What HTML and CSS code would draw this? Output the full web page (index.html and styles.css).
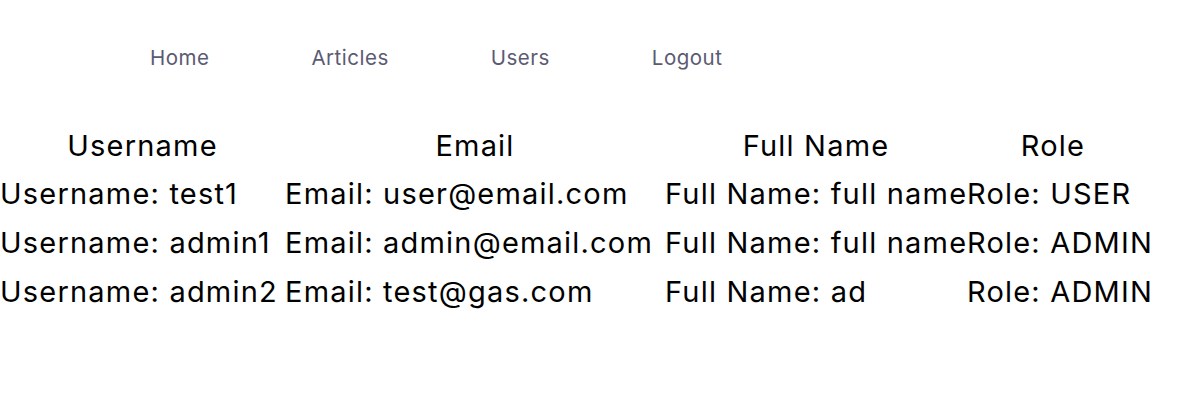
FILE: index.html
```html
<!DOCTYPE html>
<html>
<head>
<meta charset="utf-8">
<link rel="stylesheet" href="styles.css">
</head>
<body>
<nav class="nav">
  <a class="nav-link" href="#">Home</a>
  <a class="nav-link" href="#">Articles</a>
  <a class="nav-link" href="#">Users</a>
  <a class="nav-link" href="#">Logout</a>
</nav>
<table class="users">
  <colgroup>
    <col class="c1"><col class="c2"><col class="c3"><col class="c4">
  </colgroup>
  <thead>
    <tr><th>Username</th><th>Email</th><th>Full Name</th><th>Role</th></tr>
  </thead>
  <tbody>
    <tr><td>Username: test1</td><td>Email: user@email.com</td><td>Full Name: full name</td><td>Role: USER</td></tr>
    <tr><td>Username: admin1</td><td>Email: admin@email.com</td><td>Full Name: full name</td><td>Role: ADMIN</td></tr>
    <tr><td>Username: admin2</td><td>Email: test@gas.com</td><td>Full Name: ad</td><td>Role: ADMIN</td></tr>
  </tbody>
</table>
</body>
</html>
```
FILE: styles.css
```css
html, body {
  margin: 0;
  padding: 0;
  background: #ffffff;
  font-family: "Inter", "Noto Sans", sans-serif;
  color: #000000;
}
.nav {
  display: flex;
  gap: 102px;
  padding: 43px 0 0 150px;
  height: 78px;
  box-sizing: border-box;
}
.nav-link {
  font-size: 20.5px;
  line-height: 30px;
  letter-spacing: 0.5px;
  color: #5b5a73;
  text-decoration: none;
}
.users {
  border-collapse: collapse;
  table-layout: fixed;
  width: 1139px;
  margin-top: 43px;
}
.c1 { width: 285px; }
.c2 { width: 380px; }
.c3 { width: 302px; }
.c4 { width: 172px; }
.users th, .users td {
  padding: 0;
  height: 49px;
  font-size: 29px;
  font-weight: 400;
  letter-spacing: 1.2px;
  white-space: nowrap;
  overflow: visible;
  vertical-align: middle;
}
.users th {
  height: 48px;
  text-align: center;
}
.users td { text-align: left; }
```
